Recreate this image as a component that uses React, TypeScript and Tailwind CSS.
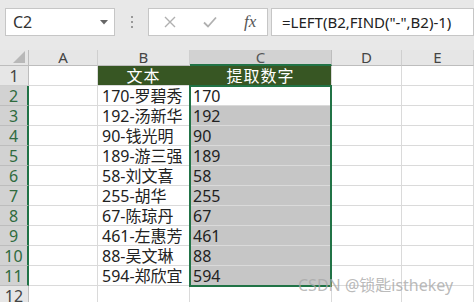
import React from "react";

const rows: [string, string][] = [
  ["170-罗碧秀", "170"],
  ["192-汤新华", "192"],
  ["90-钱光明", "90"],
  ["189-游三强", "189"],
  ["58-刘文喜", "58"],
  ["255-胡华", "255"],
  ["67-陈琼丹", "67"],
  ["461-左惠芳", "461"],
  ["88-吴文琳", "88"],
  ["594-郑欣宜", "594"],
];

const font = { fontFamily: '"Noto Sans", "Noto Sans CJK SC", sans-serif' };

function RowHead({ n, selected }: { n: number; selected?: boolean }) {
  return (
    <div
      className={
        "h-[20px] flex items-center justify-center border-b border-r text-[16px] leading-none " +
        (selected
          ? "bg-[#d2d2d2] text-[#2f6b3e] border-b-[#bdbdbd] border-r-[#217346] border-r-2"
          : "bg-[#e6e6e6] text-[#444] border-b-[#cfcfcf] border-r-[#bdbdbd]")
      }
    >
      {n}
    </div>
  );
}

function Cell({ children, className = "" }: { children?: React.ReactNode; className?: string }) {
  return (
    <div className={"h-[20px] flex items-center border-b border-r border-[#dadada] text-[16px] leading-none text-[#222] " + className}>
      {children}
    </div>
  );
}

export default function App() {
  return (
    <div className="w-[474px] h-[302px] overflow-hidden bg-white relative" style={font}>
      {/* formula bar */}
      <div className="h-[50px] bg-[#e8e8e8] flex items-start pt-[8px] pl-[5px]">
        <div className="w-[110px] h-[28px] bg-white border border-[#c6c6c6] flex items-center justify-between pl-[7px] pr-[6px]">
          <span className="text-[16px] text-[#333]">C2</span>
          <svg width="8" height="5" viewBox="0 0 8 5"><path d="M0 0h8L4 4.5z" fill="#666" /></svg>
        </div>
        <div className="w-[33px] h-[28px] flex flex-col items-center justify-center gap-[3px]">
          <span className="w-[2px] h-[2px] bg-[#999]" />
          <span className="w-[2px] h-[2px] bg-[#999]" />
          <span className="w-[2px] h-[2px] bg-[#999]" />
        </div>
        <div className="w-[120px] h-[28px] bg-white border border-[#c6c6c6] flex items-center">
          <svg className="ml-[15px]" width="12" height="12" viewBox="0 0 12 12">
            <path d="M1 1L11 11M11 1L1 11" stroke="#b0b0b0" strokeWidth="1.4" />
          </svg>
          <svg className="ml-[27px]" width="14" height="12" viewBox="0 0 14 12">
            <path d="M1 6.5L5 10.5L13 1.5" stroke="#b0b0b0" strokeWidth="1.8" fill="none" />
          </svg>
          <span
            className="ml-[27px] text-[17px] italic text-[#555]"
            style={{ fontFamily: '"Liberation Serif", serif' }}
          >
            fx
          </span>
        </div>
        <div className="ml-[3px] flex-1 h-[28px] bg-white border border-[#c6c6c6] flex items-center pl-[10px]">
          <span className="text-[15px] text-[#222]">=LEFT(B2,FIND("-",B2)-1)</span>
        </div>
      </div>

      {/* sheet */}
      <div className="grid grid-cols-[29px_69px_92px_142px_70px_1fr] relative">
        {/* column headers */}
        <div className="h-[16px] bg-[#e6e6e6] border-r border-b border-[#bdbdbd] flex items-end justify-end pr-[3px] pb-[2px]">
          <svg width="12" height="12" viewBox="0 0 12 12"><path d="M12 0V12H0z" fill="#b8b8b8" /></svg>
        </div>
        {["A", "B", "C", "D", "E"].map((c) => (
          <div
            key={c}
            className={
              "h-[16px] flex items-center justify-center border-r text-[15px] leading-none " +
              (c === "C"
                ? "bg-[#d2d2d2] text-[#555] border-r-[#bdbdbd] border-b-2 border-b-[#217346]"
                : "bg-[#e6e6e6] text-[#444] border-r-[#cfcfcf] border-b border-b-[#bdbdbd]")
            }
          >
            {c}
          </div>
        ))}

        {/* row 1 */}
        <RowHead n={1} />
        <Cell />
        <Cell className="bg-[#375623] border-r-[#375623] justify-center text-white tracking-[1px]">文本</Cell>
        <Cell className="bg-[#375623] justify-center text-white tracking-[1px]">提取数字</Cell>
        <Cell />
        <Cell />

        {rows.map(([b, c], i) => (
          <React.Fragment key={b}>
            <RowHead n={i + 2} selected />
            <Cell />
            <Cell className="pl-[4px]">{b}</Cell>
            <Cell className={"pl-[3px] " + (i === 0 ? "bg-white" : "bg-[#c6c6c6] border-[#a9a9a9]")}>{c}</Cell>
            <Cell />
            <Cell />
          </React.Fragment>
        ))}

        <RowHead n={12} />
        <Cell />
        <Cell />
        <Cell />
        <Cell />
        <Cell />

        {/* selection outline C2:C11 */}
        <div className="absolute left-[189px] top-[35px] w-[143px] h-[202px] border-2 border-[#217346] pointer-events-none" />
      </div>

      {/* watermark */}
      <div className="absolute left-[298px] top-[273px] whitespace-nowrap text-[16px] text-[#a8a8a8]/80">
        CSDN @锁匙isthekey
      </div>
    </div>
  );
}
